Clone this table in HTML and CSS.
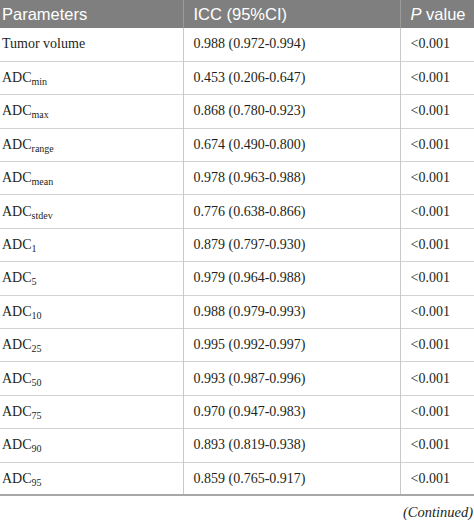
FILE: index.html
```html
<!DOCTYPE html>
<html>
<head>
<meta charset="utf-8">
<link rel="stylesheet" href="styles.css">
</head>
<body>
<table class="icc-table">
  <colgroup>
    <col class="col-param">
    <col class="col-icc">
    <col class="col-p">
  </colgroup>
  <thead>
    <tr>
      <th>Parameters</th>
      <th>ICC (95%CI)</th>
      <th><i>P</i> value</th>
    </tr>
  </thead>
  <tbody>
    <tr><td>Tumor volume</td><td>0.988 (0.972-0.994)</td><td>&lt;0.001</td></tr>
    <tr><td>ADC<sub>min</sub></td><td>0.453 (0.206-0.647)</td><td>&lt;0.001</td></tr>
    <tr><td>ADC<sub>max</sub></td><td>0.868 (0.780-0.923)</td><td>&lt;0.001</td></tr>
    <tr><td>ADC<sub>range</sub></td><td>0.674 (0.490-0.800)</td><td>&lt;0.001</td></tr>
    <tr><td>ADC<sub>mean</sub></td><td>0.978 (0.963-0.988)</td><td>&lt;0.001</td></tr>
    <tr><td>ADC<sub>stdev</sub></td><td>0.776 (0.638-0.866)</td><td>&lt;0.001</td></tr>
    <tr><td>ADC<sub>1</sub></td><td>0.879 (0.797-0.930)</td><td>&lt;0.001</td></tr>
    <tr><td>ADC<sub>5</sub></td><td>0.979 (0.964-0.988)</td><td>&lt;0.001</td></tr>
    <tr><td>ADC<sub>10</sub></td><td>0.988 (0.979-0.993)</td><td>&lt;0.001</td></tr>
    <tr><td>ADC<sub>25</sub></td><td>0.995 (0.992-0.997)</td><td>&lt;0.001</td></tr>
    <tr><td>ADC<sub>50</sub></td><td>0.993 (0.987-0.996)</td><td>&lt;0.001</td></tr>
    <tr><td>ADC<sub>75</sub></td><td>0.970 (0.947-0.983)</td><td>&lt;0.001</td></tr>
    <tr><td>ADC<sub>90</sub></td><td>0.893 (0.819-0.938)</td><td>&lt;0.001</td></tr>
    <tr><td>ADC<sub>95</sub></td><td>0.859 (0.765-0.917)</td><td>&lt;0.001</td></tr>
  </tbody>
</table>
<div class="continued">(Continued)</div>
</body>
</html>
```

FILE: styles.css
```css
html, body {
  margin: 0;
  padding: 0;
  background: #ffffff;
  overflow: hidden;
}

body {
  width: 474px;
  font-family: "Liberation Serif", "Times New Roman", serif;
  color: #231f20;
}

.icc-table {
  width: 474px;
  border-collapse: collapse;
  table-layout: fixed;
}

.col-param { width: 183px; }
.col-icc { width: 217px; }
.col-p { width: 74px; }

.icc-table th {
  height: 28px;
  padding: 0 0 0 10px;
  background: #7f7f7f;
  color: #ffffff;
  font-family: "Liberation Sans", Arial, sans-serif;
  font-weight: normal;
  font-size: 16.5px;
  text-align: left;
  border-left: 1px solid #9a9a9a;
  box-sizing: border-box;
}

.icc-table th:first-child {
  padding-left: 2px;
  border-left: none;
}

.icc-table td {
  height: 33.4px;
  padding: 0 0 0 10px;
  font-size: 14px;
  text-align: left;
  border-top: 1px solid #d2d2d2;
  border-left: 1px solid #c8c8c8;
  box-sizing: border-box;
  white-space: nowrap;
}

.icc-table tbody tr:first-child td {
  border-top: none;
}

.icc-table td:first-child {
  padding-left: 2px;
  border-left: none;
}

.icc-table tbody tr:last-child td {
  border-bottom: 2px solid #a8a8a8;
}

.icc-table sub {
  font-size: 10px;
  vertical-align: -3px;
  line-height: 0;
}

.continued {
  padding: 8px 1px 0 0;
  font-size: 14.5px;
  font-style: italic;
  text-align: right;
  white-space: nowrap;
  line-height: 17px;
}
```
